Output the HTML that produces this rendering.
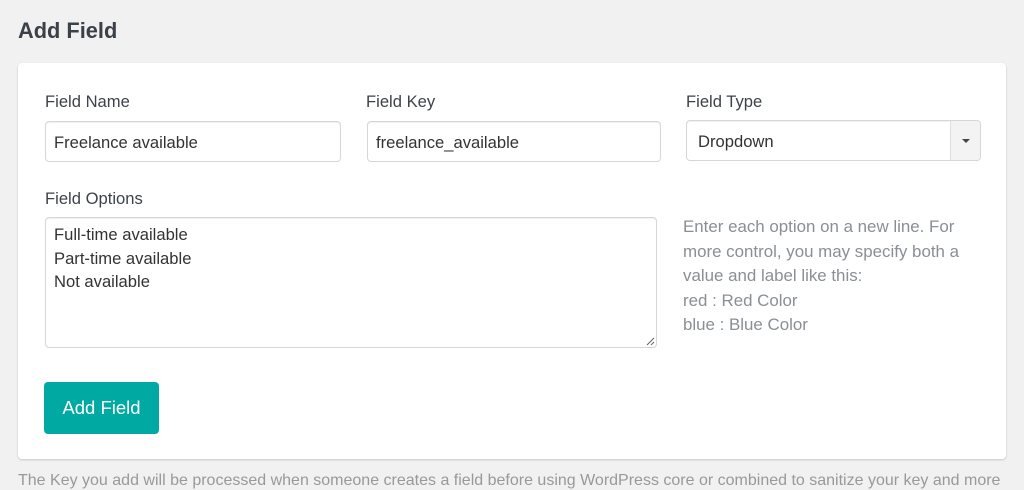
<!DOCTYPE html><html><head><style>
body{margin:0;width:1024px;height:479px;overflow:hidden;background:#f1f1f1;font-family:"Liberation Sans",sans-serif;position:relative}
.a{position:absolute}
h1{position:absolute;left:18px;top:18px;margin:0;font-size:21.8px;font-weight:bold;color:#3a4149}
.card{left:18px;top:63px;width:988px;height:396px;background:#fff;border-radius:4px;box-shadow:0 1px 2px rgba(0,0,0,.18)}
.l{font-size:16.6px;color:#3d434a}
.in{box-sizing:border-box;border:1px solid #d6d6d6;border-radius:4px;background:#fff;height:41px;font-size:16.6px;color:#333;padding:11px 0 0 8px;box-shadow:inset 0 1px 1px rgba(0,0,0,.06)}
.h{left:683px;top:215px;font-size:16.9px;line-height:24.5px;color:#8a8f95}
</style></head><body>
<h1>Add Field</h1>
<div class="a card"></div>
<div class="a l" style="left:45px;top:92px">Field Name</div>
<div class="a l" style="left:366px;top:92px">Field Key</div>
<div class="a l" style="left:686px;top:92px">Field Type</div>
<div class="a in" style="left:45px;top:121px;width:296px">Freelance available</div>
<div class="a in" style="left:367px;top:121px;width:294px">freelance_available</div>
<div class="a in" style="left:686px;top:120px;width:295px;padding-left:11px">Dropdown
<div class="a" style="right:0;top:0;width:29px;height:39px;border-left:1px solid #ddd;background:#f3f3f3;border-radius:0 4px 4px 0"><div class="a" style="left:11px;top:18px;border-left:4px solid transparent;border-right:4px solid transparent;border-top:4px solid #444"></div></div></div>
<div class="a l" style="left:45px;top:189px">Field Options</div>
<div class="a in" style="left:45px;top:217px;width:612px;height:131px;padding:5px 0 0 8px;line-height:23.5px">Full-time available<br>Part-time available<br>Not available
<svg class="a" style="right:1px;bottom:1px" width="10" height="10"><path d="M2 9L9 2M6 9L9 6" stroke="#666" stroke-width="1"/></svg></div>
<div class="a h">Enter each option on a new line. For<br>more control, you may specify both a<br>value and label like this:<br>red : Red Color<br>blue : Blue Color</div>
<div class="a" style="left:44px;top:382px;width:115px;height:52px;background:#00aaa2;border-radius:4px;color:#fff;font-size:18.5px;text-align:center;line-height:52px">Add Field</div>
<div class="a" style="left:18px;top:472px;font-size:16px;color:#999;white-space:nowrap">The Key you add will be processed when someone creates a field before using WordPress core or combined to sanitize your key and more</div>
</body></html>
